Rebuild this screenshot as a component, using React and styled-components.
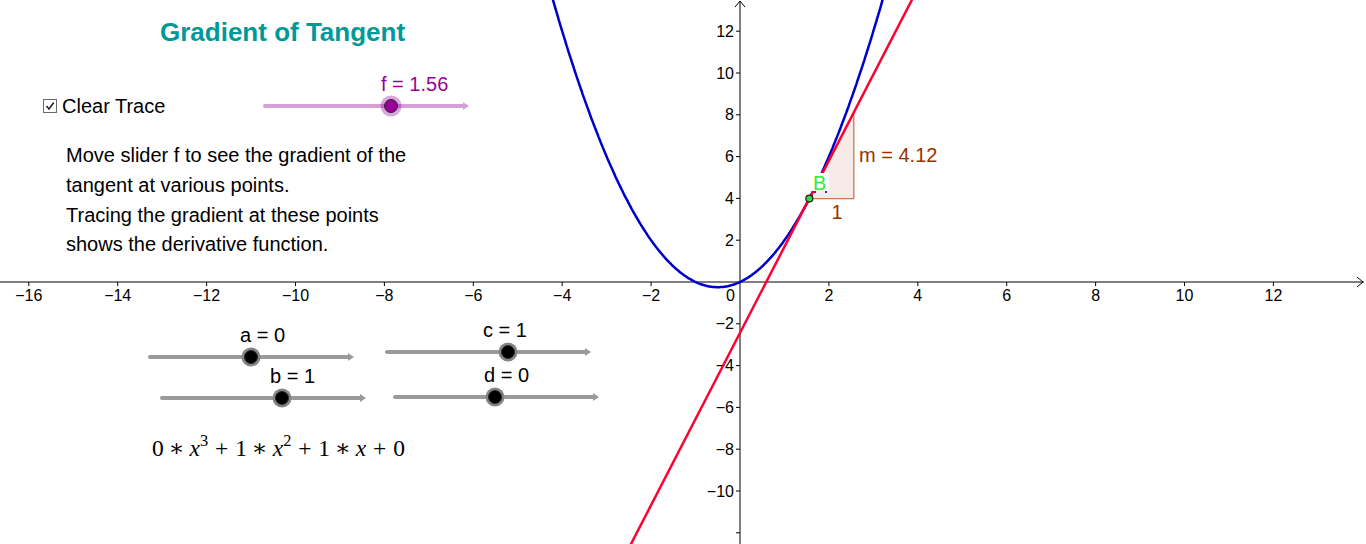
import React from "react";
import styled, { createGlobalStyle } from "styled-components";

const GlobalStyle = createGlobalStyle`
  html, body {
    margin: 0;
    padding: 0;
    background: #fff;
  }
  body {
    font-family: "Liberation Sans", Arial, sans-serif;
  }
`

const Applet = styled.div`
    position: relative;
    width: 1366px;
    height: 544px;
    overflow: hidden;
    background: #fff;
`

const Graph = styled.svg`
    position: absolute;
    top: 0;
    left: 0;
    display: block;
    font-family: "Liberation Sans", Arial, sans-serif;
`

const Overlay = styled.div`
    position: absolute;
    top: 0;
    left: 0;
    width: 640px;
    padding-top: 17px;
    display: flex;
    flex-direction: column;
    font-family: "Liberation Sans", Arial, sans-serif;
    color: #000;
`

const Title = styled.h1`
    margin: 0 0 0 160px;
    font-size: 26px;
    line-height: 30px;
    font-weight: 700;
    color: #009999;
`

const ControlRow = styled.div`
    display: flex;
    align-items: flex-end;
    margin-top: 25px;
    padding-left: 43px;
`

const CheckLabel = styled.label`
    display: flex;
    align-items: center;
    gap: 5px;
    width: 220px;
    margin-bottom: -10px;
    font-size: 20px;
    line-height: 24px;
`

const CheckBox = styled.span`
    display: flex;
    align-items: center;
    justify-content: center;
    width: 12px;
    height: 12px;
    border: 1px solid #6b6b6b;
    background: #fff;

    svg {
        display: block;
    }
`

const SliderBox = styled.div`
    display: flex;
    flex-direction: column;
    gap: 8px;
    width: 206px;
    margin-left: ${p => p.$dx || 0}px;
    margin-top: ${p => p.$dy || 0}px;
`

const SliderLabel = styled.div`
    margin-left: ${p => p.$at}px;
    font-size: 20px;
    line-height: 24px;
    color: ${p => p.$color};
    white-space: nowrap;
`

const Track = styled.div`
    position: relative;
    width: 200px;
    height: 4px;
    border-radius: 2px 0 0 2px;
    background: ${p => p.$color};

    &::after {
        content: "";
        position: absolute;
        right: -6px;
        top: -2px;
        border-left: 6px solid ${p => p.$color};
        border-top: 4px solid transparent;
        border-bottom: 4px solid transparent;
    }
`

const Thumb = styled.span`
    position: absolute;
    top: 50%;
    left: ${p => p.$pos}px;
    width: 12px;
    height: 12px;
    border-radius: 50%;
    transform: translate(-50%, -50%);
    background: ${p => p.$fill};
    border: 1px solid #2a2a2a;
    box-shadow: 0 0 0 ${p => p.$ring}px ${p => p.$halo};
`

const Description = styled.p`
    margin: 33px 0 0 66px;
    font-size: 20px;
    line-height: 29.8px;
`

const SliderGrid = styled.div`
    display: grid;
    grid-template-columns: 237px 230px;
    row-gap: 4px;
    align-items: start;
    margin-top: 58px;
    padding-left: 148px;
`

const Formula = styled.div`
    margin: 33px 0 0 152px;
    font-family: "Liberation Serif", "DejaVu Serif", serif;
    font-size: 23.5px;
    line-height: 30px;
    white-space: nowrap;
`

const Var = styled.i`
    font-style: italic;
`

const Op = styled.span`
    margin: 0 ${p => p.$space || 0.21}em;
`

const Sup = styled.sup`
    font-size: 0.7em;
    line-height: 0;
    vertical-align: 0.6em;
`

// graph coordinates
const OX = 740
const OY = 282
const SX = 44.45
const SY = 20.9
const px = x => OX + x * SX
const py = y => OY - y * SY

const F = 1.56
const f = x => x * x + x
const slope = 2 * F + 1

function Slider({label, color = "#9a9a9a", labelColor = "#000", fill = "#000", halo = "#858585", ring = 2.5, labelAt, pos, dx, dy}) {
    return (
        <SliderBox $dx={dx} $dy={dy}>
            <SliderLabel $at={labelAt} $color={labelColor}>{label}</SliderLabel>
            <Track $color={color}>
                <Thumb $pos={pos} $fill={fill} $halo={halo} $ring={ring}/>
            </Track>
        </SliderBox>
    )
}

function Canvas() {
    const xTicks = []
    for (let k = -16; k <= 12; k += 2) if (k !== 0) xTicks.push(k)
    const yTicks = []
    for (let k = -12; k <= 12; k += 2) if (k !== 0) yTicks.push(k)

    const curve = []
    for (let x = -4.3; x <= 3.3; x += 0.02) {
        curve.push(`${px(x).toFixed(1)},${py(f(x)).toFixed(1)}`)
    }

    const fy = f(F)
    const tan = x => fy + slope * (x - F)
    const xTop = F + (13.8 - fy) / slope
    const xBot = F + (-12.8 - fy) / slope

    const bx = px(F)
    const by = py(fy)
    const cx = px(F + 1)
    const cy = py(fy + slope)

    return (
        <Graph width="1366" height="544" viewBox="0 0 1366 544">
            <g stroke="#000" strokeWidth="1" fill="none">
                <line x1="0" y1={OY} x2="1364" y2={OY}/>
                <polyline points={`1357,${OY - 5} 1363,${OY} 1357,${OY + 5}`}/>
                <line x1={OX} y1="544" x2={OX} y2="1"/>
                <polyline points={`${OX - 5},7 ${OX},1 ${OX + 5},7`}/>
                {xTicks.map(k => (
                    <line key={k} x1={px(k)} y1={OY} x2={px(k)} y2={OY + 4}/>
                ))}
                {yTicks.map(k => (
                    <line key={k} x1={OX - 4} y1={py(k)} x2={OX} y2={py(k)}/>
                ))}
            </g>
            <g fontSize="16" fill="#000">
                {xTicks.map(k => (
                    <text key={k} x={px(k)} y={OY + 19} textAnchor="middle">
                        {k < 0 ? `\u2212${-k}` : k}
                    </text>
                ))}
                <text x={OX - 5} y={OY + 19} textAnchor="end">0</text>
                {yTicks.filter(k => k >= -10).map(k => (
                    <text key={k} x={OX - 6} y={py(k) + 5.5} textAnchor="end">
                        {k < 0 ? `\u2212${-k}` : k}
                    </text>
                ))}
            </g>

            <polygon
                points={`${bx},${by} ${cx},${by} ${cx},${cy}`}
                fill="#f7ebe7"
                stroke="#c87a52"
                strokeWidth="1.3"
            />
            <polyline points={curve.join(" ")} fill="none" stroke="#0000cc" strokeWidth="2.5"/>
            <line
                x1={px(xTop)} y1={py(tan(xTop))}
                x2={px(xBot)} y2={py(tan(xBot))}
                stroke="#ff0033" strokeWidth="2.5"
            />

            <rect x="812" y="173" width="17" height="18" fill="#fff"/>
            <text x="813" y="190" fontSize="20" fill="#33ee33">B</text>
            <rect x="814" y="191" width="2" height="2" fill="#990099"/>
            <rect x="825" y="191" width="2" height="2" fill="#990099"/>
            <circle cx={bx} cy={by} r="3.5" fill="#33dd33" stroke="#1a1a1a" strokeWidth="1.2"/>

            <text x="859" y="162" fontSize="20" fill="#993300">m = 4.12</text>
            <text x="837" y="219" fontSize="20" fill="#993300" textAnchor="middle">1</text>
        </Graph>
    )
}

function App() {
    return (
        <Applet>
            <GlobalStyle/>
            <Canvas/>
            <Overlay>
                <Title>Gradient of Tangent</Title>

                <ControlRow>
                    <CheckLabel>
                        <CheckBox>
                            <svg width="10" height="10" viewBox="0 0 10 10">
                                <polyline points="1.5,5 4,8 8.8,1.5" fill="none" stroke="#222" strokeWidth="1.5"/>
                            </svg>
                        </CheckBox>
                        Clear Trace
                    </CheckLabel>
                    <Slider
                        label="f = 1.56"
                        color="#d89ed8"
                        labelColor="#990099"
                        fill="#990099"
                        halo="rgba(153, 0, 153, 0.35)"
                        ring={3.5}
                        labelAt={118}
                        pos={128}
                    />
                </ControlRow>

                <Description>
                    Move slider f to see the gradient of the<br/>
                    tangent at various points.<br/>
                    Tracing the gradient at these points<br/>
                    shows the derivative function.
                </Description>

                <SliderGrid>
                    <Slider label="a = 0" labelAt={92} pos={103} dy={5}/>
                    <Slider label="c = 1" labelAt={98} pos={123}/>
                    <Slider label="b = 1" labelAt={110} pos={122} dx={12} dy={1}/>
                    <Slider label="d = 0" labelAt={91} pos={102} dx={8}/>
                </SliderGrid>

                <Formula>
                    0<Op>∗</Op><Var>x</Var><Sup>3</Sup><Op $space={0.29}>+</Op>1<Op>∗</Op><Var>x</Var><Sup>2</Sup><Op $space={0.29}>+</Op>1<Op>∗</Op><Var>x</Var><Op $space={0.29}>+</Op>0
                </Formula>
            </Overlay>
        </Applet>
    )
}

export default App
